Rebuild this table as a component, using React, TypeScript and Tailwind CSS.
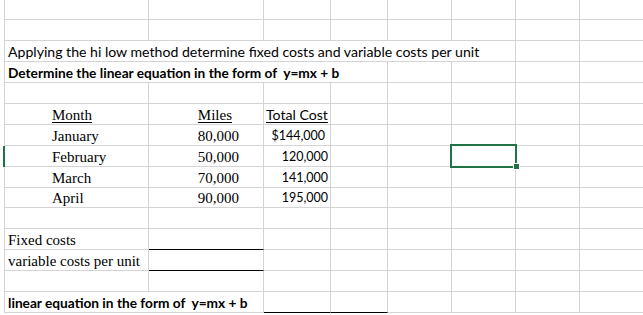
import React from "react";

const sans = "font-['Lato','Liberation_Sans',sans-serif] text-[14.1px]";
const bold = "font-['Lato','Liberation_Sans',sans-serif] text-[13.7px] font-bold";
const serif = "font-['Liberation_Serif','Times_New_Roman',serif] text-[15px]";
const line = "border-[#d4d4d4]";

type CellProps = {
  w: string;
  className?: string;
  children?: React.ReactNode;
};

const Cell = ({ w, className = "", children }: CellProps) => (
  <div
    className={`${w} shrink-0 h-full border-r border-b ${line} flex items-end overflow-visible whitespace-nowrap leading-[18px] ${className}`}
  >
    {children}
  </div>
);

const Row = ({
  h,
  gutter = "",
  children,
}: {
  h: string;
  gutter?: string;
  children?: React.ReactNode;
}) => (
  <div className={`flex ${h}`}>
    <div className={`w-[5px] shrink-0 h-full border-r ${line} ${gutter}`} />
    {children}
  </div>
);

// plain columns from index `from` to H
const Rest = ({ from }: { from: number }) => {
  const cols = [
    "w-[144px]",
    "w-[115px]",
    "w-[67px]",
    "w-[57px]",
    "w-[64px]",
    "w-[64px]",
    "w-[64px]",
    "w-[64px]",
  ];
  return (
    <>
      {cols.slice(from).map((c, i) => (
        <Cell key={i} w={c} />
      ))}
    </>
  );
};

const EmptyRow = ({ h }: { h: string }) => (
  <Row h={h}>
    <Rest from={0} />
  </Row>
);

const App = () => {
  return (
    <div className="w-[643px] h-[315px] overflow-hidden bg-white text-black">
      <EmptyRow h="h-[20px]" />
      <EmptyRow h="h-[21px]" />

      {/* long note spills over to column F */}
      <Row h="h-[21px]">
        <Cell w="w-[511px]" className={`${sans} pl-[3px]`}>
          Applying the hi low method determine fixed costs and variable costs per unit
        </Cell>
        <Rest from={6} />
      </Row>
      <Row h="h-[21px]">
        <Cell w="w-[383px]" className={`${bold} pl-[3px]`}>
          Determine the linear equation in the form of&nbsp; y=mx + b
        </Cell>
        <Rest from={4} />
      </Row>
      <EmptyRow h="h-[21px]" />

      {/* data table */}
      <Row h="h-[21px]">
        <Cell w="w-[144px]" className={`${serif} pl-[47px]`}>
          <span className="underline underline-offset-2">Month</span>
        </Cell>
        <Cell w="w-[115px]" className={`${serif} justify-end pr-[31px]`}>
          <span className="underline underline-offset-2">Miles</span>
        </Cell>
        <Cell w="w-[67px]" className={`${sans} pl-[2px]`}>
          <span className="underline underline-offset-2">Total Cost</span>
        </Cell>
        <Rest from={3} />
      </Row>
      {[
        ["January", "80,000", "$144,000"],
        ["February", "50,000", "120,000"],
        ["March", "70,000", "141,000"],
        ["April", "90,000", "195,000"],
      ].map(([month, miles, cost], i) => (
        <Row
          key={month}
          h={i === 3 ? "h-[20px]" : "h-[21px]"}
          gutter={i === 1 ? "border-r-2 border-r-[#217346]" : ""}
        >
          <Cell w="w-[144px]" className={`${serif} pl-[47px]`}>
            {month}
          </Cell>
          <Cell w="w-[115px]" className={`${serif} text-[13.5px] justify-end pr-[24px]`}>
            {miles}
          </Cell>
          <Cell
            w="w-[67px]"
            className={`font-['Lato','Liberation_Sans',sans-serif] text-[12.5px] justify-end ${i === 0 ? "pr-[5px]" : "pr-[2px]"}`}
          >
            {cost}
          </Cell>
          <Cell w="w-[57px]" />
          <Cell w="w-[64px]" />
          <Cell w="w-[64px]" className="relative">
            {i === 1 && (
              <>
                <div className="absolute -inset-[2px] z-10 border-2 border-[#217346]" />
                <div className="absolute -right-[5px] -bottom-[4px] z-20 w-[7px] h-[7px] bg-[#217346] border border-white" />
              </>
            )}
          </Cell>
          <Rest from={6} />
        </Row>
      ))}

      <EmptyRow h="h-[21px]" />

      {/* answer lines */}
      <Row h="h-[21px]">
        <Cell w="w-[144px]" className={`${serif} pl-[3px]`}>
          Fixed costs
        </Cell>
        <Cell w="w-[115px]" className="border-b-black" />
        <Rest from={2} />
      </Row>
      <Row h="h-[21px]">
        <Cell w="w-[144px]" className={`${serif} pl-[3px]`}>
          variable costs per unit
        </Cell>
        <Cell w="w-[115px]" className="border-b-black" />
        <Rest from={2} />
      </Row>
      <EmptyRow h="h-[21px]" />
      <Row h="h-[21px]">
        <Cell w="w-[259px]" className={`${bold} pl-[3px]`}>
          linear equation in the form of&nbsp; y=mx + b
        </Cell>
        <Cell w="w-[67px]" className="border-b-black" />
        <Cell w="w-[57px]" className="border-b-black" />
        <Rest from={4} />
      </Row>
    </div>
  );
};

export default App;
